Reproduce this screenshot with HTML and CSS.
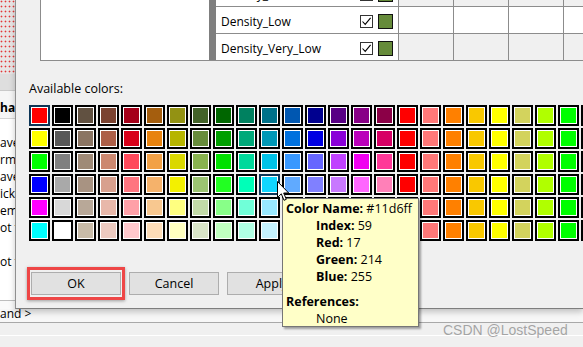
FILE: index.html
```html
<!DOCTYPE html>
<html>
<head>
<meta charset="utf-8">
<link rel="stylesheet" href="styles.css">
</head>
<body>
<div class="screen">
  <div class="strip">
    <div class="dots"></div>
    <div class="strip-gap"></div>
    <div class="strip-head">har</div>
    <div class="strip-list">
      <div>ave</div><div>rm</div><div>ave</div><div>ick</div><div>em</div><div>ot f</div><div>&nbsp;</div><div>ot f</div>
    </div>
    <div class="strip-foot"></div>
  </div>

  <div class="dialog">
    <div class="tbl">
      <div class="tbl-left"></div>
      <div class="tbl-split"></div>
      <div class="tbl-grid">
        <div class="trow alt">
          <div class="name"><span class="lbl">Density_Medium</span><span class="chk"><svg viewBox="0 0 11 11" width="11" height="11"><path d="M1.5 5.5 L4.2 8.4 L9.6 1.8" fill="none" stroke="#000" stroke-width="1.1"/></svg></span><span class="csw"></span></div>
          <div class="cell"></div><div class="cell"></div><div class="cell"></div><div class="cell"></div>
        </div>
        <div class="trow">
          <div class="name"><span class="lbl">Density_Low</span><span class="chk"><svg viewBox="0 0 11 11" width="11" height="11"><path d="M1.5 5.5 L4.2 8.4 L9.6 1.8" fill="none" stroke="#000" stroke-width="1.1"/></svg></span><span class="csw"></span></div>
          <div class="cell"></div><div class="cell"></div><div class="cell"></div><div class="cell"></div>
        </div>
        <div class="trow alt last">
          <div class="name"><span class="lbl">Density_Very_Low</span><span class="chk"><svg viewBox="0 0 11 11" width="11" height="11"><path d="M1.5 5.5 L4.2 8.4 L9.6 1.8" fill="none" stroke="#000" stroke-width="1.1"/></svg></span><span class="csw"></span></div>
          <div class="cell"></div><div class="cell"></div><div class="cell"></div><div class="cell"></div>
        </div>
      </div>
    </div>

    <div class="avail">Available colors:</div>

    <div class="swatches">
      <div class="sw sel" style="background:#ff0000"></div><div class="sw" style="background:#000000"></div><div class="sw" style="background:#615141"></div><div class="sw" style="background:#7b4331"></div><div class="sw" style="background:#a50019"></div><div class="sw" style="background:#a55e0e"></div><div class="sw" style="background:#939213"></div><div class="sw" style="background:#436229"></div><div class="sw" style="background:#006600"></div><div class="sw" style="background:#008160"></div><div class="sw" style="background:#00718a"></div><div class="sw" style="background:#0057b1"></div><div class="sw" style="background:#00008f"></div><div class="sw" style="background:#580085"></div><div class="sw" style="background:#880087"></div><div class="sw" style="background:#8b0047"></div><div class="sw" style="background:#ff0000"></div><div class="sw" style="background:#ff7878"></div><div class="sw" style="background:#ff8000"></div><div class="sw" style="background:#f9c800"></div><div class="sw" style="background:#ffff00"></div><div class="sw" style="background:#d3d35d"></div><div class="sw" style="background:#b0ff00"></div><div class="sw" style="background:#00ff00"></div><div class="sw" style="background:#00ff80"></div>

      <div class="sw" style="background:#ffff00"></div><div class="sw" style="background:#585858"></div><div class="sw" style="background:#8b7563"></div><div class="sw" style="background:#ac5f48"></div><div class="sw" style="background:#d80019"></div><div class="sw" style="background:#e8830f"></div><div class="sw" style="background:#b6b500"></div><div class="sw" style="background:#678c3b"></div><div class="sw" style="background:#009f00"></div><div class="sw" style="background:#00a97a"></div><div class="sw" style="background:#0098b6"></div><div class="sw" style="background:#0071de"></div><div class="sw" style="background:#0000e2"></div><div class="sw" style="background:#8a00d8"></div><div class="sw" style="background:#ba00ba"></div><div class="sw" style="background:#d70065"></div><div class="sw" style="background:#ff0000"></div><div class="sw" style="background:#ff7878"></div><div class="sw" style="background:#ff8000"></div><div class="sw" style="background:#f9c800"></div><div class="sw" style="background:#ffff00"></div><div class="sw" style="background:#d3d35d"></div><div class="sw" style="background:#b0ff00"></div><div class="sw" style="background:#00ff00"></div><div class="sw" style="background:#00ff80"></div>

      <div class="sw" style="background:#00ff00"></div><div class="sw" style="background:#808080"></div><div class="sw" style="background:#9f8a77"></div><div class="sw" style="background:#cc8870"></div><div class="sw" style="background:#ff4a5b"></div><div class="sw" style="background:#f2a146"></div><div class="sw" style="background:#dad800"></div><div class="sw" style="background:#88b24f"></div><div class="sw" style="background:#00e000"></div><div class="sw" style="background:#00d99c"></div><div class="sw" style="background:#00c2e8"></div><div class="sw" style="background:#3898ff"></div><div class="sw" style="background:#6666ff"></div><div class="sw" style="background:#c041ff"></div><div class="sw" style="background:#f000f0"></div><div class="sw" style="background:#ff3898"></div><div class="sw" style="background:#ff0000"></div><div class="sw" style="background:#ff7878"></div><div class="sw" style="background:#ff8000"></div><div class="sw" style="background:#f9c800"></div><div class="sw" style="background:#ffff00"></div><div class="sw" style="background:#d3d35d"></div><div class="sw" style="background:#b0ff00"></div><div class="sw" style="background:#00ff00"></div><div class="sw" style="background:#00ff80"></div>

      <div class="sw" style="background:#0000ff"></div><div class="sw" style="background:#a9a9a9"></div><div class="sw" style="background:#a89382"></div><div class="sw" style="background:#d8a08e"></div><div class="sw" style="background:#ff7580"></div><div class="sw" style="background:#f5b26b"></div><div class="sw" style="background:#f3f000"></div><div class="sw" style="background:#9cc472"></div><div class="sw" style="background:#22ff22"></div><div class="sw" style="background:#00ffb8"></div><div class="sw sel" style="background:#11d6ff"></div><div class="sw" style="background:#60aaff"></div><div class="sw" style="background:#8080ff"></div><div class="sw" style="background:#c878ff"></div><div class="sw" style="background:#ff66ff"></div><div class="sw" style="background:#ff80b8"></div><div class="sw" style="background:#ff0000"></div><div class="sw" style="background:#ff7878"></div><div class="sw" style="background:#ff8000"></div><div class="sw" style="background:#f9c800"></div><div class="sw" style="background:#ffff00"></div><div class="sw" style="background:#d3d35d"></div><div class="sw" style="background:#b0ff00"></div><div class="sw" style="background:#00ff00"></div><div class="sw" style="background:#00ff80"></div>

      <div class="sw" style="background:#ff00ff"></div><div class="sw" style="background:#d8d8d8"></div><div class="sw" style="background:#b8a898"></div><div class="sw" style="background:#e8b8aa"></div><div class="sw" style="background:#ffa0a8"></div><div class="sw" style="background:#f8c890"></div><div class="sw" style="background:#ffff80"></div><div class="sw" style="background:#c2daa8"></div><div class="sw" style="background:#88ff88"></div><div class="sw" style="background:#70ffd8"></div><div class="sw" style="background:#98e8ff"></div><div class="sw" style="background:#98c8ff"></div><div class="sw" style="background:#a8a8ff"></div><div class="sw" style="background:#dca8ff"></div><div class="sw" style="background:#ffa0ff"></div><div class="sw" style="background:#ffa8cc"></div><div class="sw" style="background:#ff0000"></div><div class="sw" style="background:#ff7878"></div><div class="sw" style="background:#ff8000"></div><div class="sw" style="background:#f9c800"></div><div class="sw" style="background:#ffff00"></div><div class="sw" style="background:#d3d35d"></div><div class="sw" style="background:#b0ff00"></div><div class="sw" style="background:#00ff00"></div><div class="sw" style="background:#00ff80"></div>

      <div class="sw" style="background:#00ffff"></div><div class="sw" style="background:#ffffff"></div><div class="sw" style="background:#c8bba8"></div><div class="sw" style="background:#eccac0"></div><div class="sw" style="background:#ffc8cc"></div><div class="sw" style="background:#fcdcb8"></div><div class="sw" style="background:#ffffc0"></div><div class="sw" style="background:#d8e4c8"></div><div class="sw" style="background:#c0ffc0"></div><div class="sw" style="background:#b0ffe4"></div><div class="sw" style="background:#c4f2ff"></div><div class="sw" style="background:#c8e0ff"></div><div class="sw" style="background:#d0d0ff"></div><div class="sw" style="background:#ecd0ff"></div><div class="sw" style="background:#ffd0ff"></div><div class="sw" style="background:#ffd0e4"></div><div class="sw" style="background:#ff0000"></div><div class="sw" style="background:#ff7878"></div><div class="sw" style="background:#ff8000"></div><div class="sw" style="background:#f9c800"></div><div class="sw" style="background:#ffff00"></div><div class="sw" style="background:#d3d35d"></div><div class="sw" style="background:#b0ff00"></div><div class="sw" style="background:#00ff00"></div><div class="sw" style="background:#00ff80"></div>
    </div>

    <div class="buttons">
      <div class="btn ok">OK</div>
      <div class="btn">Cancel</div>
      <div class="btn">Apply</div>
    </div>
  </div>

  <div class="bottom">
    <div class="addr">and &gt;</div>
    <div class="status"></div>
    <div class="rest"></div>
  </div>

  <div class="tip">
    <div><b>Color Name:</b> #11d6ff</div>
    <div class="ind"><b>Index:</b> 59</div>
    <div class="ind"><b>Red:</b> 17</div>
    <div class="ind"><b>Green:</b> 214</div>
    <div class="ind"><b>Blue:</b> 255</div>
    <div class="refs"><b>References:</b></div>
    <div class="ind">None</div>
  </div>

  <svg class="cursor" width="13" height="21" viewBox="0 0 13 21">
    <path d="M0.5 0.5 L0.5 16.5 L4.3 12.8 L7 19.3 L9.3 18.3 L6.7 12 L11.7 12 Z" fill="#fff" stroke="#000" stroke-width="1" stroke-linejoin="miter"/>
  </svg>

  <div class="watermark">CSDN @LostSpeed</div>
</div>
</body>
</html>
```

FILE: styles.css
```css
body {
  margin: 0;
  font-family: "Open Sans", "Noto Sans", sans-serif;
  font-size: 12px;
  color: #000;
}

.screen {
  width: 583px;
  height: 347px;
  overflow: hidden;
  position: relative;
  display: grid;
  grid-template-columns: 15px 1fr;
  grid-template-rows: 309px 1fr;
  background: #f0f0f0;
}

/* parent window strip on the left */
.strip {
  display: flex;
  flex-direction: column;
  overflow: hidden;
  white-space: nowrap;
}
.dots {
  height: 74px;
  background-color: #e8e5e5;
  background-image: radial-gradient(circle at 1.5px 1.5px, #e23838 0.8px, transparent 1.1px);
  background-size: 4px 5px;
}
.strip-gap {
  height: 16px;
  background: #dedede;
  border-bottom: 1px solid #c9c9c9;
}
.strip-head {
  height: 18px;
  padding-top: 9px;
  line-height: 15px;
  font-weight: 700;
  background: #f6f6f6;
  border-bottom: 1px solid #d4d4d4;
}
.strip-list {
  height: 166px;
  padding-top: 15px;
  line-height: 17px;
  background: #fff;
  border-bottom: 1px solid #bdbdbd;
}
.strip-foot {
  flex: 1;
  background: #fafafa;
}

/* dialog */
.dialog {
  grid-column: 2;
  grid-row: 1;
  position: relative;
  z-index: 1;
  overflow: hidden;
  background: #f0f0f0;
  border-left: 1px solid #8f8f8f;
  border-bottom: 1px solid #7e7e7e;
  box-shadow: 0 3px 6px rgba(0, 0, 0, 0.22);
  padding-left: 13px;
  display: flex;
  flex-direction: column;
}

.tbl {
  display: flex;
  height: 61px;
  flex: none;
  box-sizing: border-box;
  margin-left: 11px;
  border-left: 1px solid #8c8c8c;
  border-bottom: 1px solid #8c8c8c;
}
.tbl-left {
  width: 168px;
  flex: none;
  background: #fff;
}
.tbl-split {
  width: 7px;
  flex: none;
  background: #7f7f7f;
}
.tbl-grid {
  flex: 1;
  display: flex;
  flex-direction: column;
  justify-content: flex-end;
  overflow: hidden;
  background: #fff;
}
.trow {
  display: flex;
  flex: none;
  height: 26px;
  border-bottom: 1px solid #8c8c8c;
}
.trow.last {
  border-bottom: none;
}
.name {
  width: 182px;
  flex: none;
  box-sizing: border-box;
  display: flex;
  align-items: center;
  padding-left: 5px;
  padding-top: 2px;
  background: #fff;
  white-space: nowrap;
}
.lbl {
  flex: 1;
  overflow: hidden;
}
.chk {
  width: 13px;
  height: 13px;
  box-sizing: border-box;
  border: 1px solid #333;
  background: #fff;
  display: flex;
  align-items: center;
  justify-content: center;
  flex: none;
}
.csw {
  width: 15px;
  height: 15px;
  box-sizing: border-box;
  border: 1px solid #111;
  background: #668b3a;
  margin-left: 5px;
  margin-right: 5px;
  flex: none;
}
.cell {
  width: 54px;
  flex: none;
  border-left: 1px solid #8c8c8c;
  background: #fff;
}
.trow.alt .cell {
  background: #f0f0f0;
}

.avail {
  margin-top: 20px;
  line-height: 15px;
  font-size: 12.5px;
}

.swatches {
  margin-top: 9px;
  display: grid;
  grid-template-columns: repeat(25, 21px);
  grid-auto-rows: 21px;
  gap: 2px;
}
.sw {
  box-sizing: border-box;
  border: 2px solid #000;
  box-shadow: inset 0 0 0 1px #fff;
}
.sw.sel {
  border-color: #0d3556;
}

.buttons {
  display: flex;
  gap: 8px;
  margin-top: 31px;
  margin-left: 2px;
}
.btn {
  width: 90px;
  height: 23px;
  box-sizing: border-box;
  flex: none;
  border: 1px solid #adadad;
  background: #e1e1e1;
  text-align: center;
  line-height: 21px;
  font-size: 12.5px;
  position: relative;
}
.btn.ok::after {
  content: "";
  position: absolute;
  top: -6px;
  bottom: -6px;
  left: -5px;
  right: -5px;
  border: 3px solid #ee4646;
  box-shadow: 0 1px 3px rgba(0, 0, 0, 0.35);
}

/* bottom of the parent window */
.bottom {
  grid-column: 1 / -1;
  grid-row: 2;
  display: flex;
  flex-direction: column;
}
.addr {
  height: 13px;
  line-height: 9px;
  background: #f7f7f7;
  border-bottom: 1px solid #a8a8a8;
  white-space: nowrap;
}
.status {
  height: 12px;
  background: #f0f0f0;
  border-bottom: 1px solid #fff;
}
.rest {
  flex: 1;
  background: #f0f0f0;
}

/* tooltip overlay */
.tip {
  position: absolute;
  left: 282px;
  top: 198px;
  width: 137px;
  height: 129px;
  box-sizing: border-box;
  z-index: 5;
  border: 1px solid #767676;
  background: #ffffc8;
  box-shadow: 2px 2px 2px rgba(0, 0, 0, 0.35);
  padding: 1px 3px;
  font-size: 12.5px;
  line-height: 17px;
  white-space: nowrap;
}
.tip b {
  font-weight: 700;
}
.tip .ind {
  padding-left: 30px;
}
.tip .refs {
  margin-top: 8px;
}

.cursor {
  position: absolute;
  left: 277px;
  top: 181px;
  z-index: 6;
}

.watermark {
  position: absolute;
  left: 443px;
  top: 322px;
  z-index: 7;
  font-family: "Liberation Sans", Arial, sans-serif;
  font-size: 14px;
  line-height: 16px;
  color: rgba(150, 150, 150, 0.85);
  white-space: nowrap;
}
```
